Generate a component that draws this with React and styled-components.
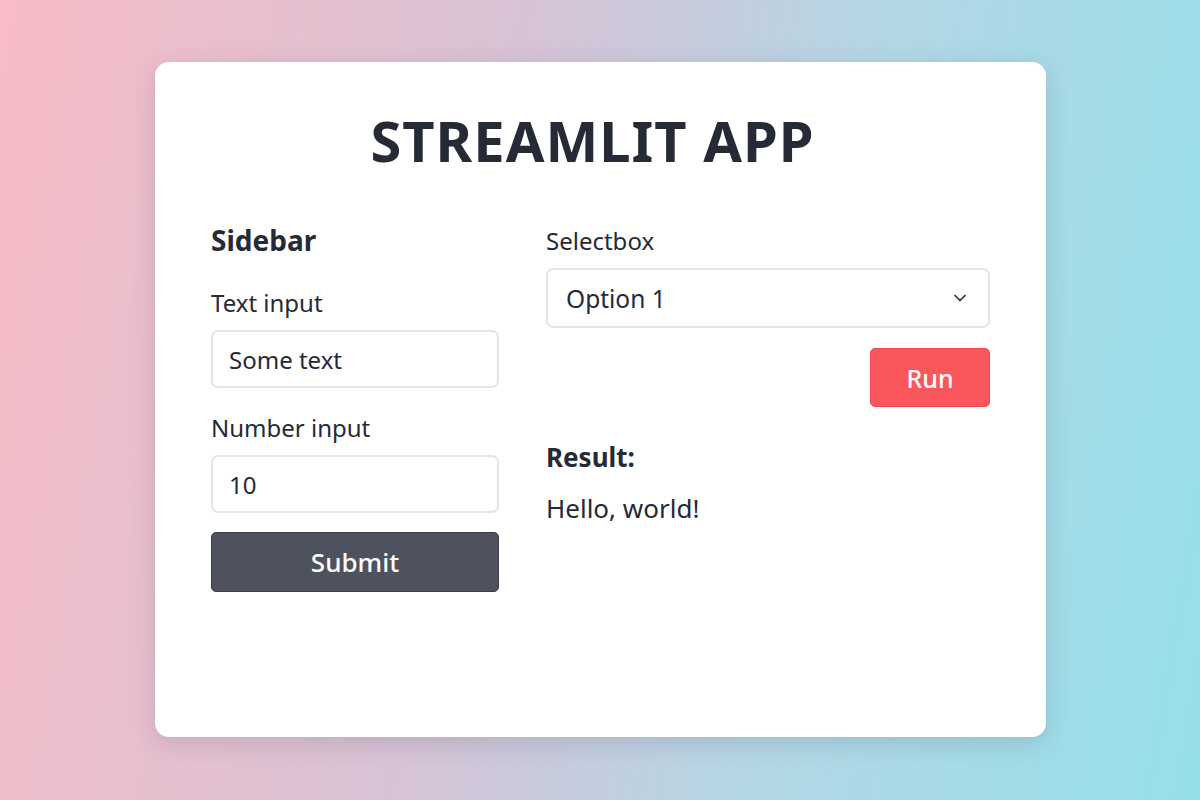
import React from "react";
import styled, { createGlobalStyle } from "styled-components";

const GlobalStyle = createGlobalStyle`
  * { box-sizing: border-box; }
  html, body { margin: 0; padding: 0; }
  body {
    font-family: "Noto Sans", "Open Sans", sans-serif;
    color: #262a36;
  }
`;

function App() {
  return (
    <>
      <GlobalStyle />
      <Page>
        <Card>
          <Title>STREAMLIT APP</Title>
          <Columns>
            <LeftCol>
              <Heading>Sidebar</Heading>
              <Label $top={30}>Text input</Label>
              <Field>Some text</Field>
              <Label $top={25}>Number input</Label>
              <Field>10</Field>
              <SubmitBtn>Submit</SubmitBtn>
            </LeftCol>
            <RightCol>
              <Label $first>Selectbox</Label>
              <Select>
                <span>Option 1</span>
                <svg width="20" height="20" viewBox="0 0 24 24" fill="none" stroke="#262a36" strokeWidth="2" strokeLinecap="round" strokeLinejoin="round">
                  <path d="M6 9l6 6 6-6" />
                </svg>
              </Select>
              <BtnRow>
                <RunBtn>Run</RunBtn>
              </BtnRow>
              <Heading $result>Result:</Heading>
              <Output>Hello, world!</Output>
            </RightCol>
          </Columns>
        </Card>
      </Page>
    </>
  );
}

export default App;

const Page = styled.div`
  width: 1200px;
  height: 800px;
  background: linear-gradient(100deg, #f8bcc6 0%, #d7c3d6 40%, #b5d6e4 65%, #95e0ea 100%);
  padding: 62px 0 0 155px;
`;

const Card = styled.div`
  width: 891px;
  height: 675px;
  background: #ffffff;
  border-radius: 14px;
  box-shadow: 0 6px 24px rgba(60, 60, 90, 0.18);
  padding: 42px 56px 0 56px;
`;

const Title = styled.h1`
  margin: 0;
  padding-right: 16px;
  text-align: center;
  font-size: 56px;
  font-weight: 700;
  letter-spacing: 1px;
  line-height: 72px;
  color: #262a36;
`;

const Columns = styled.div`
  display: flex;
  gap: 47px;
  margin-top: 40px;
`;

const LeftCol = styled.div`
  width: 288px;
  display: flex;
  flex-direction: column;
`;

const RightCol = styled.div`
  width: 444px;
  display: flex;
  flex-direction: column;
`;

const Heading = styled.div`
  font-size: ${(p) => (p.$result ? "26px" : "28px")};
  font-weight: 700;
  line-height: 36px;
  margin-top: ${(p) => (p.$result ? "32px" : "6px")};
`;

const Label = styled.div`
  font-size: 24px;
  line-height: 30px;
  margin-top: ${(p) => (p.$first ? "10px" : `${p.$top ?? 10}px`)};
  margin-bottom: 12px;
  color: #262a36;
`;

const Field = styled.div`
  height: 58px;
  border: 2px solid #e4e4ea;
  border-radius: 7px;
  padding: 0 16px;
  display: flex;
  align-items: center;
  font-size: 24px;
`;

const SubmitBtn = styled.div`
  margin-top: 19px;
  height: 60px;
  border-radius: 5px;
  background: #4e525f;
  border: 1px solid #3a3d48;
  color: #ffffff;
  font-size: 26px;
  font-weight: 500;
  display: flex;
  align-items: center;
  justify-content: center;
`;

const Select = styled.div`
  height: 60px;
  border: 2px solid #e4e4ea;
  border-radius: 7px;
  padding: 0 18px 0 18px;
  display: flex;
  align-items: center;
  justify-content: space-between;
  font-size: 24.5px;
`;

const BtnRow = styled.div`
  display: flex;
  justify-content: flex-end;
  margin-top: 20px;
`;

const RunBtn = styled.div`
  width: 120px;
  height: 59px;
  border-radius: 5px;
  background: #f9575c;
  border: 1px solid #ee474d;
  color: #ffffff;
  font-size: 25px;
  font-weight: 500;
  display: flex;
  align-items: center;
  justify-content: center;
`;

const Output = styled.div`
  font-size: 26px;
  line-height: 34px;
  margin-top: 16px;
`;
